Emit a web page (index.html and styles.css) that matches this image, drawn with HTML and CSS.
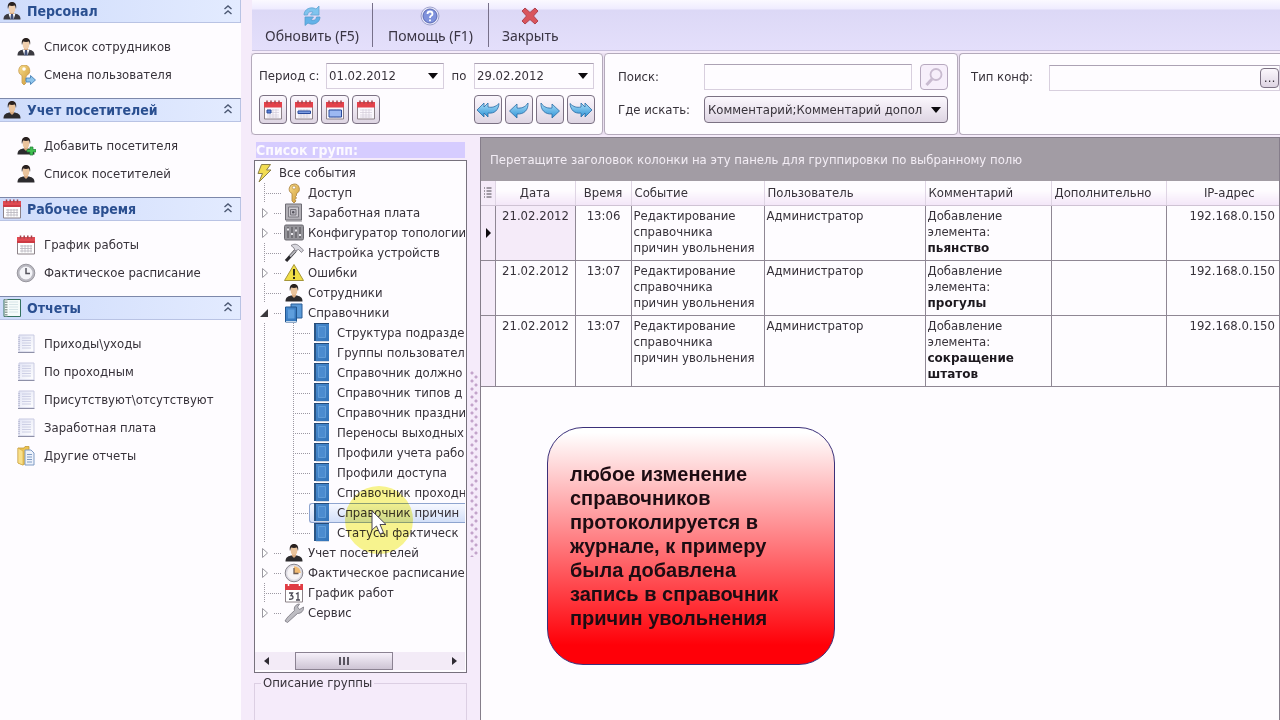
FILE: index.html
```html
<!DOCTYPE html>
<html lang="ru">
<head>
<meta charset="utf-8">
<title>Журнал событий</title>
<link rel="stylesheet" href="styles.css">
</head>
<body>
<svg class="sprite" aria-hidden="true">
  <defs>
    <linearGradient id="g-sheet" x2="1" y2="1"><stop offset="0" stop-color="#e2e4f5"/><stop offset="1" stop-color="#fff"/></linearGradient>
    <linearGradient id="g-book" x2="1" y2="1"><stop offset="0" stop-color="#4b8cd0"/><stop offset="1" stop-color="#3273b8"/></linearGradient>
    <linearGradient id="g-arrow" x2="0" y2="1"><stop offset="0" stop-color="#a9def8"/><stop offset="1" stop-color="#2f93d6"/></linearGradient>
    <linearGradient id="g-gold" x2="1" y2="1"><stop offset="0" stop-color="#f8dc8a"/><stop offset="1" stop-color="#cf9a35"/></linearGradient>
  </defs>
  <symbol id="person" viewBox="0 0 20 20"><path d="M1.5 18.5c0-3.500 1.500-5 5.500-6h6c4 1 5.500 2.500 5.500 6z" fill="#2c2b2e"/><path d="M8 10h4v3l-2 2-2-2z" fill="#d9aa80"/><ellipse cx="10" cy="7.500" rx="3.300" ry="4.500" fill="#eac49d"/><path d="M6 8C5 3.500 7 1 10 1s5 2.500 4 7l-1-3.500c-2 .5-4 .5-6 0z" fill="#2a211f"/></symbol>
  <symbol id="suit" viewBox="0 0 20 20"><path d="M1.500 18.500c0-3.500 1.500-5 5.500-6h6c4 1 5.500 2.500 5.500 6z" fill="#3b3a40"/><path d="M6.500 12.500h7L11.500 18.500h-3z" fill="#fff"/><path d="M9 13h2l.8 5.500H8.200z" fill="#44527a"/><path d="M8 10h4v3H8z" fill="#d9aa80"/><ellipse cx="10" cy="7.500" rx="3.300" ry="4.500" fill="#f0cfae"/><path d="M6 8C5 3.500 7 1 10 1s5 2.500 4 7l-1-3.500c-2 .5-4 .5-6 0z" fill="#2a211f"/></symbol>
  <symbol id="person-add" viewBox="0 0 20 20"><use href="#person"/><path d="M11 13.500h3V11h3v2.500h3V16h-3v3h-3v-3h-3z" fill="#3fc04f" stroke="#23803a" stroke-width=".7"/></symbol>
  <symbol id="key" viewBox="0 0 20 20"><path d="M10 1a5 5 0 0 0-2 9.500V18l2 2 2-2-1-1.500 1.500-1.500-1-1.500 1-1v-2A5 5 0 0 0 10 1z" fill="url(#g-gold)" stroke="#a8803c" stroke-width=".8"/><circle cx="10" cy="4.500" r="1.600" fill="#fff" stroke="#a8803c" stroke-width=".6"/></symbol>
  <symbol id="key-go" viewBox="0 0 20 20"><path d="M8 0a5.500 5.500 0 0 0-2 10.500V18l2 2 2-2-1-1.500 1.500-1.500-1-1.500 1-3A5.500 5.500 0 0 0 8 0z" fill="url(#g-gold)" stroke="#c79b4c" stroke-width=".8"/><circle cx="8" cy="4" r="1.800" fill="#fff"/><path d="M10 13h4.500v-2.500L19.500 15l-5 4.500V17H10z" fill="#8dc4ec" stroke="#3c78b0" stroke-width=".8"/></symbol>
  <symbol id="calendar" viewBox="0 0 20 20"><path d="M1.500 3h17v16h-17z" fill="#fff" stroke="#8c8288"/><path d="M1 2h18v6H1z" fill="#e04a52"/><path d="M1 7h18" stroke="#b92b36"/><path d="M4.500.5v3M8.200.5v3M11.800.5v3M15.500.5v3" stroke="#a3434c" stroke-width="1.500"/><path d="M4 11h12M4 13.500h12M4 16h12M6 10v7.500M9 10v7.500M12 10v7.500M15 10v7.500" stroke="#b8b4bd" stroke-width=".8"/></symbol>
  <symbol id="cal-base" viewBox="0 0 20 20"><path d="M1.500 3h17v16h-17z" fill="#fbf8fd" stroke="#8c8288"/><path d="M1 2h18v5.500H1z" fill="#e3414a"/><path d="M4 .5v3M8 .5v3M12 .5v3M16 .5v3" stroke="#a3434c" stroke-width="1.500"/><path d="M4 10h12M4 12.500h12M4 15h12M4 17h12M7 9v9M10 9v9M13 9v9" stroke="#d3ccd8" stroke-width=".7"/></symbol>
  <symbol id="cal-day" viewBox="0 0 20 20"><use href="#cal-base"/><path d="M4 10h4v3H4z" fill="#5b82d6" stroke="#294a9c"/></symbol>
  <symbol id="cal-week" viewBox="0 0 20 20"><use href="#cal-base"/><path d="M4 11h12.500v2.500H4z" fill="#7d9de2" stroke="#294a9c"/></symbol>
  <symbol id="cal-month" viewBox="0 0 20 20"><use href="#cal-base"/><path d="M4 10h12.500v7H4z" fill="#9cb8f2" stroke="#294a9c"/></symbol>
  <symbol id="cal-31" viewBox="0 0 20 20"><path d="M1.500 2h17v17h-17z" fill="#fff" stroke="#8c8288"/><path d="M1 1h18v6H1z" fill="#e03c44"/><path d="M4.500 0v3M15.500 0v3" stroke="#fff" stroke-width="1.500"/><path d="M5 10h3.500L7 12.500q2 0 2 2t-4 1.700M12 11l2-1.200V17M12 17h4" fill="none" stroke="#4c4a56" stroke-width="1.300"/></symbol>
  <symbol id="clock" viewBox="0 0 20 20"><circle cx="10" cy="10" r="8.800" fill="#b9b8c0" stroke="#98969e"/><circle cx="10" cy="10" r="6.500" fill="#f4f4f8"/><path d="M10 5v5.500h4" fill="none" stroke="#56545d" stroke-width="1.500"/></symbol>
  <symbol id="clock-gold" viewBox="0 0 20 20"><circle cx="10" cy="10" r="8.800" fill="#dcdae2" stroke="#88858d"/><circle cx="10" cy="10" r="6.800" fill="#f6f3f5"/><path d="M10 10V3.200A6.800 6.800 0 0 1 16.800 10z" fill="#f2bb72"/><path d="M10 5v5.500h4.500" fill="none" stroke="#6b5a50" stroke-width="1.300"/></symbol>
  <symbol id="sheet" viewBox="0 0 20 20"><path d="M3 1h15v17H3z" fill="url(#g-sheet)" stroke="#c9cbe2"/><path d="M6 4h9M6 6.500h9M6 9h9M6 11.500h9M6 14h9" stroke="#c4c7e0" stroke-width=".8"/><path d="M2 18.500h16.500" stroke="#8e90a8"/><path d="M3 3v14" stroke="#a7aac8" stroke-dasharray="1 1"/></symbol>
  <symbol id="report" viewBox="0 0 20 20"><path d="M2 1.500h16.500v17H2z" fill="#f6fbfa" stroke="#35725f"/><path d="M7 4h9M7 6.500h9M7 9h9M7 11.500h9M7 14h9" stroke="#cfdfe3" stroke-width=".8"/><path d="M4 1v18" stroke="#93a39d" stroke-width="3" stroke-dasharray="1.500 1"/></symbol>
  <symbol id="folder" viewBox="0 0 20 20"><path d="M2 2h6l1-1.500h4V15L7 19l-5-2z" fill="#ecc24f" stroke="#c19a3a" stroke-width=".8"/><path d="M9 4h6l3 3v12H9z" fill="#edf2fb" stroke="#7f9bc4"/><path d="M11 8.500h5M11 11h5M11 13.500h5M11 16h5" stroke="#7f9bc4"/><path d="M2 2l5 3v14l-5-2z" fill="#f9e08a" stroke="#d0a640" stroke-width=".6"/></symbol>
  <symbol id="bolt" viewBox="0 0 20 20"><path d="M6.500 1.500h9L11.500 7h4.500L4 19l3.500-8.500H3z" fill="#f2dc52" stroke="#8c8048"/></symbol>
  <symbol id="safe" viewBox="0 0 20 20"><path d="M1.500 1h16v16h-16z" fill="#b2b0b6" stroke="#6e6c74"/><path d="M4.500 4h10v10h-10z" fill="#cbc9cf" stroke="#7c7a82"/><path d="M6.500 6.500h5.500v5.500H6.500z" fill="#b9b7bf" stroke="#77757d"/><circle cx="9.200" cy="9.200" r="1.200" fill="#55535c"/><path d="M2 18h16" stroke="#88868d"/></symbol>
  <symbol id="mixer" viewBox="0 0 20 20"><rect x=".5" y="2" width="19" height="15" rx="1.500" fill="#96959b" stroke="#6b6970"/><path d="M4 4v11M8 4v11M12 4v11M16 4v11" stroke="#4e4d53"/><path d="M3 6.500h2M7 11h2M11 7.500h2M15 12h2" stroke="#e8e7ec" stroke-width="2"/></symbol>
  <symbol id="hammer" viewBox="0 0 20 20"><path d="M2 18L11.500 7.500" stroke="#29282c" stroke-width="3.200"/><path d="M6 13.500L12.500 6.500" stroke="#b7b6bd" stroke-width="2"/><path d="M7 2.500c4-2.500 7-1 9 1.500l3.500 3-2 2.500-3-3-3.500 1.500L10 5z" fill="#d8d7de" stroke="#77757d" stroke-width=".8"/></symbol>
  <symbol id="warning" viewBox="0 0 20 20"><path d="M10 1.500L19.500 17.500H.5z" fill="#f0dd45" stroke="#a5963a" stroke-linejoin="round"/><path d="M10 6v6.500M10 14v2" stroke="#2d2a1c" stroke-width="2"/></symbol>
  <symbol id="books" viewBox="0 0 20 20"><path d="M7 1h11v14H7z" fill="#5b9ad8" stroke="#2a5d96"/><path d="M1.500 4h11v15h-11z" fill="url(#g-book)" stroke="#22568f"/><path d="M4 6.500h6.500v9H4z" fill="#5f9edc"/><path d="M2 18.500h10.500" stroke="#c4d9ec"/></symbol>
  <symbol id="book" viewBox="0 0 20 20"><path d="M1 1h15v17H1z" fill="url(#g-book)"/><path d="M2 1v17" stroke="#2b5584" stroke-width="2"/><path d="M1 .5h15" stroke="#244b78"/><path d="M5.500 3.500h7v11h-7z" fill="#4b8bcf" stroke="#6fa8de" stroke-width=".7"/><path d="M3 18.500h13" stroke="#d2d8e2"/></symbol>
  <symbol id="wrench" viewBox="0 0 20 20"><path d="M1 18c2-4 6-7 9.500-10.500C9.500 4 12 1 15.500 1L13.500 4l2 2.500L19.500 4c.5 4-2.500 6.500-6 6.500L3.500 19.500z" fill="#bdbcc2" stroke="#77757d" stroke-width=".8"/></symbol>
  <symbol id="refresh" viewBox="0 0 20 20"><path d="M2 9C2 3 9 0 14 3l3-3v9H8.500L11 6.200C8 5 6 6 5.500 9z" fill="#7fc4ee" stroke="#62a5d2" stroke-width=".8"/><path d="M18 11c0 6-7 9-12 6l-3 2.500V11h8.500L9 13.800c3 1.200 5 .2 5.500-2.800z" fill="#62b2e8" stroke="#559ccd" stroke-width=".8"/></symbol>
  <symbol id="help" viewBox="0 0 20 20"><circle cx="10" cy="10" r="9" fill="#e9eafa" stroke="#9fa2cc"/><circle cx="10" cy="10" r="7" fill="#7f92dc" stroke="#5a68b4"/><path d="M7.500 8q0-2.500 2.500-2.500T12.500 8q0 1-1.300 1.800T10 12M10 13.500v1.800" fill="none" stroke="#fff" stroke-width="1.800"/></symbol>
  <symbol id="close" viewBox="0 0 20 20"><path d="M2 5L5 2l5 4.500L15 2l3 3-4.500 5 4.500 5-3 3-5-4.500L5 18l-3-3 4.500-5z" fill="#d9545c" stroke="#b04350"/></symbol>
  <symbol id="arrow-left" viewBox="0 0 24 20"><path d="M2.500 11L10 4v4c4 .5 8-.5 11-5 .5 7-4 11.500-11 11v4z" fill="url(#g-arrow)" stroke="#276ba4" stroke-width=".8"/></symbol>
  <symbol id="arrow-left2" viewBox="0 0 24 20"><path d="M1 10L8 3v4l4-4v4c4 .8 7.500 0 11-3.500-.5 6.500-4.500 10.500-11 9.500v4l-4-4v4z" fill="url(#g-arrow)" stroke="#276ba4" stroke-width=".8"/></symbol>
  <symbol id="arrow-right" viewBox="0 0 24 20"><path d="M21.500 11L14 4v4c-4 .5-8-.5-11-5-.5 7 4 11.500 11 11v4z" fill="url(#g-arrow)" stroke="#276ba4" stroke-width=".8"/></symbol>
  <symbol id="arrow-right2" viewBox="0 0 24 20"><path d="M23 10L16 3v4l-4-4v4C8 7.800 4.500 7 1 3.500 1.500 10 5.500 14 12 13v4l4-4v4z" fill="url(#g-arrow)" stroke="#276ba4" stroke-width=".8"/></symbol>
  <symbol id="search" viewBox="0 0 20 20"><circle cx="12" cy="7.500" r="5.500" fill="#f6eefa" stroke="#c9bbd0" stroke-width="1.800"/><path d="M8 12l-5.500 6" stroke="#c9bbd0" stroke-width="3"/></symbol>
  <symbol id="chevrons" viewBox="0 0 10 12"><path d="M1.500 4L5 1l3.500 3M1.500 9L5 6l3.500 3" fill="none" stroke="#4c5873" stroke-width="1.400"/></symbol>
  <symbol id="closed" viewBox="0 0 20 20"><path d="M7.500 5.500l5 4.500-5 4.500z" fill="#fff" stroke="#9a98a0"/></symbol>
  <symbol id="open" viewBox="0 0 20 20"><path d="M13 6v8H5z" fill="#3b393d"/></symbol>
  <symbol id="down" viewBox="0 0 10 6"><path d="M0 0h10L5 6z" fill="#0c0a0e"/></symbol>
</svg>

<div class="app">
  <nav class="sidebar" aria-label="Разделы">
    <section class="group">
      <h2><svg><use href="#suit"/></svg><span>Персонал</span><svg class="chev"><use href="#chevrons"/></svg></h2>
      <ul>
        <li><a href="#"><svg><use href="#suit"/></svg>Список сотрудников</a></li>
        <li><a href="#"><svg><use href="#key-go"/></svg>Смена пользователя</a></li>
      </ul>
    </section>
    <section class="group">
      <h2><svg><use href="#person"/></svg><span>Учет посетителей</span><svg class="chev"><use href="#chevrons"/></svg></h2>
      <ul>
        <li><a href="#"><svg><use href="#person-add"/></svg>Добавить посетителя</a></li>
        <li><a href="#"><svg><use href="#person"/></svg>Список посетителей</a></li>
      </ul>
    </section>
    <section class="group">
      <h2><svg><use href="#calendar"/></svg><span>Рабочее время</span><svg class="chev"><use href="#chevrons"/></svg></h2>
      <ul>
        <li><a href="#"><svg><use href="#calendar"/></svg>График работы</a></li>
        <li><a href="#"><svg><use href="#clock"/></svg>Фактическое расписание</a></li>
      </ul>
    </section>
    <section class="group">
      <h2><svg><use href="#report"/></svg><span>Отчеты</span><svg class="chev"><use href="#chevrons"/></svg></h2>
      <ul>
        <li><a href="#"><svg><use href="#sheet"/></svg>Приходы\уходы</a></li>
        <li><a href="#"><svg><use href="#sheet"/></svg>По проходным</a></li>
        <li><a href="#"><svg><use href="#sheet"/></svg>Присутствуют\отсутствуют</a></li>
        <li><a href="#"><svg><use href="#sheet"/></svg>Заработная плата</a></li>
        <li><a href="#"><svg><use href="#folder"/></svg>Другие отчеты</a></li>
      </ul>
    </section>
  </nav>

  <main class="main">
    <div class="toolbar">
      <button type="button"><svg><use href="#refresh"/></svg>Обновить (F5)</button>
      <button type="button"><svg><use href="#help"/></svg>Помощь (F1)</button>
      <button type="button"><svg><use href="#close"/></svg>Закрыть</button>
    </div>

    <div class="filters">
      <section class="panel period">
        <div class="line">
          <label class="from" for="from">Период с:</label>
          <span class="date"><input id="from" type="text" value="01.02.2012"><button type="button" aria-label="Выбрать дату начала"><svg><use href="#down"/></svg></button></span>
          <label class="to" for="to">по</label>
          <span class="date"><input id="to" type="text" value="29.02.2012"><button type="button" aria-label="Выбрать дату конца"><svg><use href="#down"/></svg></button></span>
        </div>
        <div class="line steps">
          <div class="set">
            <button type="button" aria-label="День"><svg><use href="#cal-day"/></svg></button>
            <button type="button" aria-label="Неделя"><svg><use href="#cal-week"/></svg></button>
            <button type="button" aria-label="Месяц"><svg><use href="#cal-month"/></svg></button>
            <button type="button" aria-label="Год"><svg><use href="#cal-base"/></svg></button>
          </div>
          <div class="set">
            <button type="button" aria-label="Месяц назад"><svg class="wide"><use href="#arrow-left2"/></svg></button>
            <button type="button" aria-label="День назад"><svg class="wide"><use href="#arrow-left"/></svg></button>
            <button type="button" aria-label="День вперед"><svg class="wide"><use href="#arrow-right"/></svg></button>
            <button type="button" aria-label="Месяц вперед"><svg class="wide"><use href="#arrow-right2"/></svg></button>
          </div>
        </div>
      </section>
      <section class="panel find">
        <label for="query">Поиск:</label>
        <span class="query"><input id="query" type="text"><button type="button" aria-label="Найти"><svg><use href="#search"/></svg></button></span>
        <label for="where">Где искать:</label>
        <span class="where"><select id="where"><option>Комментарий;Комментарий допол</option></select><svg><use href="#down"/></svg></span>
      </section>
      <section class="panel type">
        <label for="conf">Тип конф:</label>
        <span class="conf"><input id="conf" type="text"><button type="button" aria-label="Выбрать тип">…</button></span>
      </section>
    </div>

    <div class="content">
      <aside class="groups">
        <h3>Список групп:</h3>
        <div class="treebox">
          <ul class="tree" role="tree">
            <li role="treeitem"><span class="node"><svg><use href="#bolt"/></svg>Все события</span></li>
            <li role="treeitem"><i class="branch"></i><span class="node"><svg><use href="#key"/></svg>Доступ</span></li>
            <li role="treeitem"><i class="fold"><svg><use href="#closed"/></svg></i><span class="node"><svg><use href="#safe"/></svg>Заработная плата</span></li>
            <li role="treeitem"><i class="fold"><svg><use href="#closed"/></svg></i><span class="node"><svg><use href="#mixer"/></svg>Конфигуратор топологии</span></li>
            <li role="treeitem"><i class="branch"></i><span class="node"><svg><use href="#hammer"/></svg>Настройка устройств</span></li>
            <li role="treeitem"><i class="fold"><svg><use href="#closed"/></svg></i><span class="node"><svg><use href="#warning"/></svg>Ошибки</span></li>
            <li role="treeitem"><i class="branch"></i><span class="node"><svg><use href="#person"/></svg>Сотрудники</span></li>
            <li role="treeitem"><i class="fold"><svg><use href="#open"/></svg></i><span class="node"><svg><use href="#books"/></svg>Справочники</span></li>
            <li role="treeitem"><i class="pass"></i><i class="branch"></i><span class="node"><svg><use href="#book"/></svg>Структура подразде</span></li>
            <li role="treeitem"><i class="pass"></i><i class="branch"></i><span class="node"><svg><use href="#book"/></svg>Группы пользовател</span></li>
            <li role="treeitem"><i class="pass"></i><i class="branch"></i><span class="node"><svg><use href="#book"/></svg>Справочник должно</span></li>
            <li role="treeitem"><i class="pass"></i><i class="branch"></i><span class="node"><svg><use href="#book"/></svg>Справочник типов д</span></li>
            <li role="treeitem"><i class="pass"></i><i class="branch"></i><span class="node"><svg><use href="#book"/></svg>Справочник праздни</span></li>
            <li role="treeitem"><i class="pass"></i><i class="branch"></i><span class="node"><svg><use href="#book"/></svg>Переносы выходных</span></li>
            <li role="treeitem"><i class="pass"></i><i class="branch"></i><span class="node"><svg><use href="#book"/></svg>Профили учета рабо</span></li>
            <li role="treeitem"><i class="pass"></i><i class="branch"></i><span class="node"><svg><use href="#book"/></svg>Профили доступа</span></li>
            <li role="treeitem"><i class="pass"></i><i class="branch"></i><span class="node"><svg><use href="#book"/></svg>Справочник проходн</span></li>
            <li role="treeitem" aria-selected="true"><i class="pass"></i><i class="branch"></i><span class="node selected"><svg><use href="#book"/></svg>Справочник причин</span></li>
            <li role="treeitem"><i class="pass"></i><i class="branch last"></i><span class="node"><svg><use href="#book"/></svg>Статусы фактическ</span></li>
            <li role="treeitem"><i class="fold"><svg><use href="#closed"/></svg></i><span class="node"><svg><use href="#person"/></svg>Учет посетителей</span></li>
            <li role="treeitem"><i class="fold"><svg><use href="#closed"/></svg></i><span class="node"><svg><use href="#clock-gold"/></svg>Фактическое расписание</span></li>
            <li role="treeitem"><i class="branch"></i><span class="node"><svg><use href="#cal-31"/></svg>График работ</span></li>
            <li role="treeitem"><i class="fold"><svg><use href="#closed"/></svg></i><span class="node"><svg><use href="#wrench"/></svg>Сервис</span></li>
          </ul>
          <div class="scroll">
            <button type="button" class="back" aria-label="Влево"></button>
            <div class="track"><div class="thumb"></div></div>
            <button type="button" class="next" aria-label="Вправо"></button>
          </div>
        </div>
        <fieldset><legend>Описание группы</legend></fieldset>
      </aside>
      <div class="splitter"><i></i></div>
      <section class="grid">
        <p class="hint">Перетащите заголовок колонки на эту панель для группировки по выбранному полю</p>
        <table>
          <colgroup><col class="c-mark"><col class="c-date"><col class="c-time"><col class="c-event"><col class="c-user"><col class="c-note"><col class="c-extra"><col class="c-ip"></colgroup>
          <thead>
            <tr><th class="mark"><svg viewBox="0 0 8 12"><path d="M2.500 1h5M2.500 4h5M2.500 7h5M2.500 10h5M0 1h1M0 4h1M0 7h1M0 10h1" stroke="#4c4850"/></svg></th><th class="mid">Дата</th><th class="mid">Время</th><th>Событие</th><th>Пользователь</th><th>Комментарий</th><th>Дополнительно</th><th class="mid ip">IP-адрес</th></tr>
          </thead>
          <tbody>
            <tr><td class="mark"><svg viewBox="0 0 8 12"><path d="M2 1l5 5-5 5z" fill="#0c0a0e"/></svg></td><td class="mid focus">21.02.2012</td><td class="mid">13:06</td><td class="event">Редактирование справочника причин увольнения</td><td>Администратор</td><td>Добавление элемента: <b>пьянство</b></td><td></td><td class="end">192.168.0.150</td></tr>
            <tr><td class="mark"></td><td class="mid">21.02.2012</td><td class="mid">13:07</td><td class="event">Редактирование справочника причин увольнения</td><td>Администратор</td><td>Добавление элемента: <b>прогулы</b></td><td></td><td class="end">192.168.0.150</td></tr>
            <tr><td class="mark"></td><td class="mid">21.02.2012</td><td class="mid">13:07</td><td class="event">Редактирование справочника причин увольнения</td><td>Администратор</td><td>Добавление элемента: <b>сокращение штатов</b></td><td></td><td class="end">192.168.0.150</td></tr>
          </tbody>
        </table>
      </section>
    </div>
  </main>
</div>

<p class="callout">любое изменение справочников протоколируется в журнале, к примеру была добавлена запись в справочник причин увольнения</p>
<div class="halo"></div>
<svg class="pointer" viewBox="0 0 16 26"><path d="M1 1v19l4.500-4 3.500 8 3.500-1.500-3.500-8H15z" fill="#fff" stroke="#4a4650"/></svg>
</body>
</html>
```
FILE: styles.css
```css
* { box-sizing: border-box; }
body {
  margin: 0;
  font: 13px/16px "DejaVu Sans Condensed", "DejaVu Sans", sans-serif;
  font-stretch: condensed;
  color: #37323a;
  background: #f5ebfa;
}
button, input, select { font: inherit; color: inherit; margin: 0; padding: 0; }
ul { list-style: none; margin: 0; padding: 0; }
h2, h3, p { margin: 0; }
svg { display: block; flex: none; width: 20px; height: 20px; }
.sprite { position: absolute; width: 0; height: 0; }
.app { display: flex; height: 100vh; overflow: hidden; }

.sidebar { flex: none; width: 241px; background: #fefcff; }
.group h2 {
  display: flex; align-items: center; height: 24px; padding: 0 7px 0 2px;
  border: 1px solid #b9c3e4; border-top-color: #7d88aa; border-left: 0;
  background: linear-gradient(90deg, #cfdcfb, #e3ebff);
  font-size: 14px; color: #2a4f90;
}
.group:first-child h2 { height: 23px; border-top: 0; }
.group h2 span { flex: 1; margin-left: 5px; }
.group h2 .chev { width: 10px; height: 12px; }
.group ul { padding: 10px 0 9px 16px; }
.group a { display: flex; align-items: center; gap: 8px; height: 28px; color: #37323a; text-decoration: none; }

.main { flex: 1; min-width: 0; display: flex; flex-direction: column; padding-left: 10px; }
.toolbar {
  display: flex; flex: none; height: 51px; padding: 3px 0; margin-left: 1px;
  border-bottom: 1px solid #c6bedb;
  background: linear-gradient(#fbf9ff 0, #efecff 9px, #dcd8f6 10px, #e4dffb 100%);
}
.toolbar button {
  display: flex; flex-direction: column; align-items: center; min-width: 116px; padding: 3px 13px 0;
  border: 0; border-right: 1px solid #77708a; background: none;
  font: 14px/20px "Noto Sans", sans-serif; color: #3a3544;
}
.toolbar button:last-child { min-width: 0; border-right: 0; }

.filters { display: flex; flex: none; gap: 1px; margin-top: 2px; height: 82px; background: #ebe0f1; }
.panel { border: 1px solid #b4aabb; border-radius: 4px; background: #fefcff; }
.panel input { width: 100%; min-width: 0; border: 0; outline: 0; background: none; padding: 0 2px; }
.panel button, .where {
  display: flex; align-items: center; justify-content: center;
  border: 1px solid #7b7183; border-radius: 4px;
  background: linear-gradient(#fbf7fd, #ded5e3);
}
.period { flex: none; width: 352px; padding: 9px 7px 0; }
.line { display: flex; align-items: center; }
.from { width: 67px; }
.to { width: 30px; text-align: center; }
.panel .query input, .date, .conf { border: 1px solid #d8cfde; border-top-color: #aca2b4; }
.date { display: flex; width: 118px; height: 26px; }
.date + .to + .date { width: 120px; }
.panel .date button { flex: none; width: 20px; border: 0; background: none; }
.date svg, .where svg { width: 10px; height: 6px; }
.steps { margin-top: 6px; }
.set { display: flex; gap: 3px; width: 215px; }
.set + .set { width: auto; }
.set button { width: 28px; height: 29px; }
.set .wide { width: 24px; }
.find {
  flex: none; width: 354px; display: grid; grid-template-columns: 86px 244px; align-content: start;
  align-items: center; gap: 6px 0; padding: 10px 0 0 13px;
}
.query { display: flex; gap: 8px; height: 26px; }
.panel .query button { flex: none; width: 28px; border-color: #b7a9bf; background: #f7effb; }
.where { position: relative; height: 27px; justify-content: flex-start; }
.where select { appearance: none; width: 100%; height: 100%; padding: 0 20px 0 3px; border: 0; outline: 0; background: none; }
.where svg { position: absolute; right: 6px; top: 10px; pointer-events: none; }
.type { flex: 1; display: flex; align-items: flex-start; padding: 11px 0 0 11px; border-right: 0; border-radius: 4px 0 0 4px; }
.type label { width: 78px; padding-top: 4px; }
.conf { flex: 1; display: flex; height: 26px; padding: 2px 0; }
.conf button { flex: none; width: 19px; }

.content { flex: 1; display: flex; min-height: 0; margin-top: 2px; }
.groups { flex: none; width: 216px; padding: 5px 0 0 3px; display: flex; flex-direction: column; }
.groups h3 { height: 16px; margin: 0 2px 2px; background: #d6ccff; color: #fcf9ff; font-size: 14px; }
.treebox { flex: 1; min-height: 0; display: flex; flex-direction: column; border: 1px solid #77717d; background: #fefcff; padding: 2px 1px 2px 0; }
.tree { flex: 1; overflow: hidden; }
.tree li { display: flex; height: 20px; white-space: nowrap; }
.tree i { flex: none; width: 29px; height: 20px; }
.pass {
  background: repeating-linear-gradient(#9d99a3 0 1px, transparent 1px 2px) 9px 0 / 1px 100% no-repeat;
}
.branch {
  background:
    repeating-linear-gradient(#9d99a3 0 1px, transparent 1px 2px) 9px 0 / 1px 100% no-repeat,
    repeating-linear-gradient(90deg, #9d99a3 0 1px, transparent 1px 2px) 9px 10px / 18px 1px no-repeat;
}
.branch.last {
  background:
    repeating-linear-gradient(#9d99a3 0 1px, transparent 1px 2px) 9px 0 / 1px 10px no-repeat,
    repeating-linear-gradient(90deg, #9d99a3 0 1px, transparent 1px 2px) 9px 10px / 18px 1px no-repeat;
}
.fold { background: repeating-linear-gradient(90deg, #9d99a3 0 1px, transparent 1px 2px) 19px 10px / 8px 1px no-repeat; }
.node { flex: 1; display: flex; align-items: center; gap: 4px; line-height: 20px; }
.selected { margin-left: -4px; padding-left: 3px; border: 1px solid #8ea4cf; border-right: 0; border-radius: 3px 0 0 3px; background: linear-gradient(#f6f8ff, #d3dff8); line-height: 18px; }
.scroll { display: flex; flex: none; height: 18px; background: #f3ebf7; }
.scroll button { width: 22px; border: 0; background: none; display: flex; align-items: center; justify-content: center; }
.scroll button::before { content: ""; border: 4px solid transparent; }
.scroll .back::before { border-right: 5px solid #2f2b33; border-left: 0; }
.scroll .next::before { border-left: 5px solid #2f2b33; border-right: 0; }
.track { flex: 1; padding-left: 18px; }
.thumb {
  width: 66%; height: 18px; border: 1px solid #8b8292;
  background: repeating-linear-gradient(90deg, #5a5561 0 2px, transparent 2px 4px) 50% 50% / 10px 8px no-repeat, linear-gradient(#f6f0fa, #cdc4d4);
}
fieldset { flex: none; height: 45px; margin: 2px 0 0; padding: 0 6px; border: 1px solid #dccfe3; border-bottom: 0; }
legend { padding: 0 2px; }
.splitter { flex: none; width: 13px; display: flex; align-items: center; justify-content: center; }
.splitter i {
  width: 8px; height: 186px; margin-top: 70px;
  background: radial-gradient(circle at 2px 2px, #c3a4cb 1px, transparent 2px) 0 0 / 8px 8px, radial-gradient(circle at 6px 6px, #c3a4cb 1px, transparent 2px) 0 0 / 8px 8px;
}
.grid { flex: 1; min-width: 0; border: 1px solid #857d8a; border-bottom: 0; background: #fefcff; }
.hint { height: 43px; padding: 0 9px; background: #a29ca4; color: #f3edf5; line-height: 44px; white-space: nowrap; }
table { width: 100%; border-collapse: collapse; table-layout: fixed; }
.c-mark { width: 14px; } .c-date { width: 80px; } .c-time { width: 56px; } .c-event { width: 133px; }
.c-user { width: 161px; } .c-note { width: 126px; } .c-extra { width: 115px; }
th { height: 24px; padding: 0 3px; text-align: left; font-weight: normal; border-right: 1px solid #dfd5e4; border-bottom: 1px solid #cfc3d4; background: linear-gradient(#fefcff 40%, #f3e6f8); white-space: nowrap; }
td { height: 55px; padding: 2px 1px 4px 2px; vertical-align: top; border-right: 1px solid #8f8794; border-bottom: 1px solid #8f8794; }
.event { padding-right: 6px; }
.mid { text-align: center; }
.ip { padding-left: 16px; }
.end { text-align: right; padding-right: 4px; }
td:last-child, th:last-child { border-right: 0; }
.mark { background: #f5ebf9; padding: 0 3px; vertical-align: middle; }
.mark svg { width: 8px; height: 12px; }
.focus { background: #f5ebf9; }
td b { display: block; color: #1c181e; font-family: "DejaVu Sans", sans-serif; font-stretch: normal; font-size: 12px; }

.callout {
  position: absolute; left: 547px; top: 427px; width: 288px; padding: 34px 40px 34px 22px;
  border: 1px solid #3c3079; border-radius: 36px;
  background: linear-gradient(#fff 2%, #ff0008 92%);
  font: bold 20px/24px "Liberation Sans", sans-serif; color: #1d0c12;
}
.halo { position: absolute; left: 345px; top: 486px; width: 68px; height: 68px; border-radius: 50%; background: #f8f68e; mix-blend-mode: multiply; }
.pointer { position: absolute; left: 371px; top: 510px; width: 16px; height: 26px; }
```
